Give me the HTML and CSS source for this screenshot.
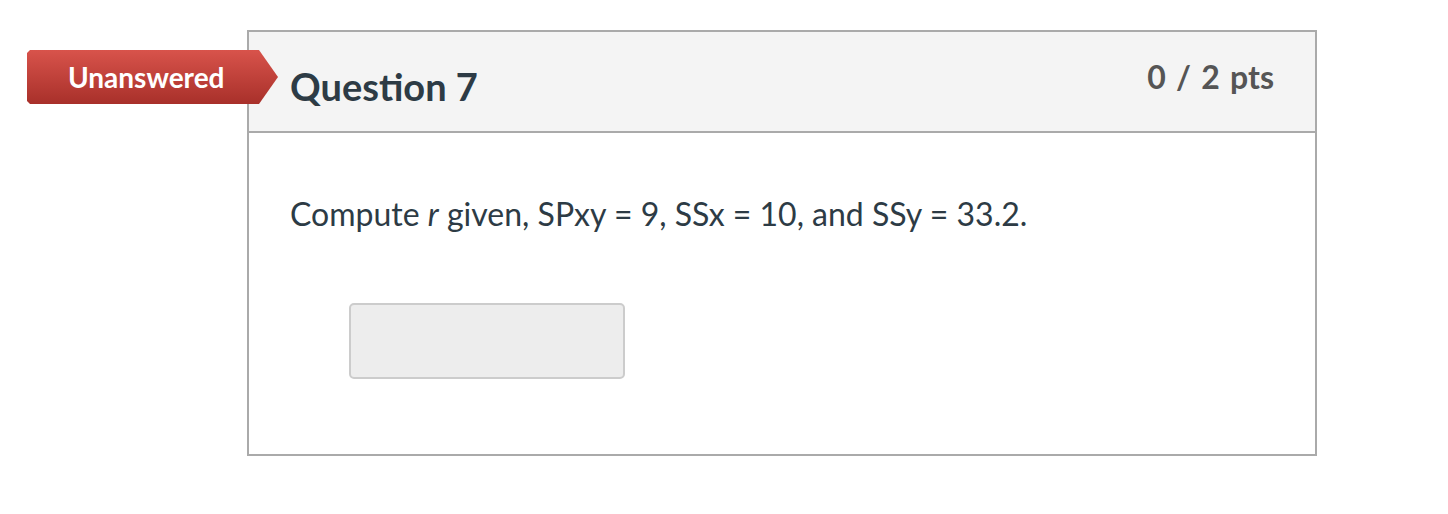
FILE: index.html
```html
<!DOCTYPE html>
<html>
<head>
<meta charset="utf-8">
<link rel="stylesheet" href="styles.css">
</head>
<body>
<div class="page">
  <div class="question">
    <div class="badge">Unanswered</div>
    <div class="q-header">
      <h2 class="q-title">Question 7</h2>
      <div class="q-pts">0 / 2 pts</div>
    </div>
    <div class="q-body">
      <p class="q-text">Compute <em>r</em> given, SPxy = 9, SSx = 10, and SSy = 33.2.</p>
      <div class="answer-box"></div>
    </div>
  </div>
</div>
</body>
</html>
```

FILE: styles.css
```css
html, body {
  margin: 0;
  padding: 0;
  background: #ffffff;
  font-family: Lato, "Liberation Sans", sans-serif;
}

.page {
  padding: 30px 0 0 247px;
}

.question {
  position: relative;
  width: 1066px;
  height: 422px;
  border: 2px solid #aaaaaa;
}

.badge {
  position: absolute;
  left: -222px;
  top: 18px;
  width: 251px;
  height: 54px;
  box-sizing: border-box;
  padding-left: 41px;
  line-height: 54px;
  color: #ffffff;
  font-weight: 700;
  font-size: 28px;
  background: linear-gradient(#d8534b, #a8302a);
  clip-path: polygon(0 3px, 3px 0, 232px 0, 251px 27px, 232px 54px, 3px 54px, 0 51px);
}

.q-header {
  display: flex;
  justify-content: space-between;
  align-items: flex-start;
  height: 101px;
  box-sizing: border-box;
  background: #f4f4f4;
  border-bottom: 2px solid #aaaaaa;
  padding: 0 41px 0 41px;
}

.q-title {
  margin: 30px 0 0 0;
  font-size: 38px;
  font-weight: 700;
  color: #2d3b45;
  line-height: 48px;
}

.q-pts {
  margin-top: 27px;
  font-size: 32px;
  font-weight: 700;
  color: #555555;
  line-height: 36px;
  word-spacing: 2.5px;
}

.q-body {
  padding: 0 41px;
}

.q-text {
  margin: 61px 0 0 0;
  font-size: 32px;
  line-height: 40px;
  color: #2d3b45;
}

.answer-box {
  margin: 69px 0 0 59px;
  width: 276px;
  height: 76px;
  box-sizing: border-box;
  background: #ededed;
  border: 2px solid #cccccc;
  border-radius: 5px;
}
```
